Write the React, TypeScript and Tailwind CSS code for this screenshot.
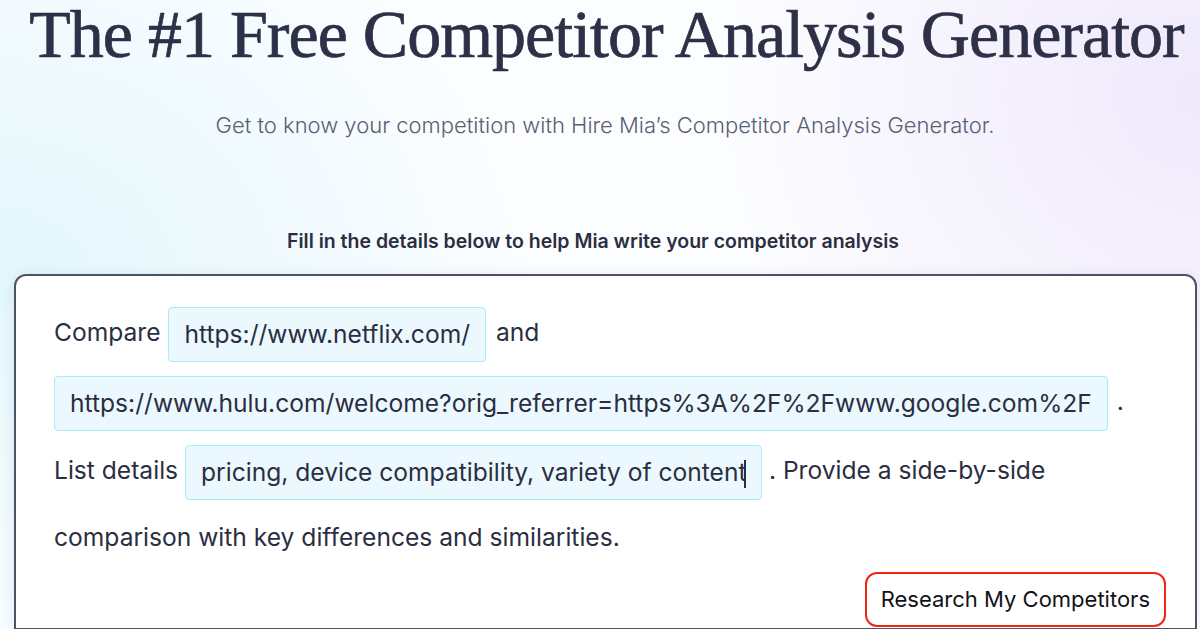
import React from "react";

function Field({ value, className, caret }: { value: string; className?: string; caret?: boolean }) {
  return (
    <span
      className={
        "inline-block align-middle h-[55px] leading-[53px] my-[7px] px-[15px] rounded-[4px] border border-[#a6ecfa] bg-[#ebf9fe] text-[#2b2e42] whitespace-nowrap " +
        (className ?? "")
      }
    >
      {value}
      {caret && <span className="inline-block w-[1.5px] h-[28px] bg-[#2b2e42] align-middle -ml-[2px]" />}
    </span>
  );
}

export default function App() {
  return (
    <div className="min-h-[629px] w-full overflow-hidden bg-[radial-gradient(ellipse_45%_70%_at_0%_45%,#e3f7fc_0%,rgba(255,255,255,0)_100%),radial-gradient(ellipse_40%_70%_at_100%_15%,#efe9fb_0%,rgba(255,255,255,0)_100%),linear-gradient(#fcfdff,#fcfdff)] font-['Inter',sans-serif]">
      <h1 className="whitespace-nowrap text-center font-['Liberation_Serif',serif] text-[68px] leading-[68px] tracking-[-1px] text-[#2d3046] [-webkit-text-stroke:0.7px_#2d3046] pl-[13px]">
        The #1 Free Competitor Analysis Generator
      </h1>
      <p className="mt-[42px] text-center text-[22px] leading-[30px] font-light text-[#5a5f73] pl-[10px]">
        Get to know your competition with Hire Mia’s Competitor Analysis Generator.
      </p>
      <p className="mt-[88px] text-center text-[19.5px] leading-[26px] font-semibold text-[#2b2e40] -ml-[14px]">
        Fill in the details below to help Mia write your competitor analysis
      </p>
      <div className="mt-[20px] ml-[14px] mr-[3px] h-[355px] rounded-t-[12px] border-2 border-b border-[#4f5266] bg-white shadow-[0_0_14px_rgba(0,0,0,0.07)] pl-[38px] pr-[29px] pt-[24px]">
        <p className="text-[24.6px] leading-[61px] text-[#2b2e42] pr-[22px]">
          Compare <Field value="https://www.netflix.com/" className="ml-[1px] mr-[3px]" /> and{" "}
          <Field value="https://www.hulu.com/welcome?orig_referrer=https%3A%2F%2Fwww.google.com%2F" />{" "}
          <span className="ml-[2px]">.</span>{" "}
          List details{" "}
          <Field value="pricing, device compatibility, variety of content" caret />{" "}
          . Provide a side-by-side comparison with key differences and similarities.
        </p>
        <div className="mt-[4px] flex justify-end">
          <button className="h-[55px] rounded-[12px] border-2 border-[#f2250f] px-[14px] text-[22px] text-[#111318] bg-white">
            Research My Competitors
          </button>
        </div>
      </div>
    </div>
  );
}
